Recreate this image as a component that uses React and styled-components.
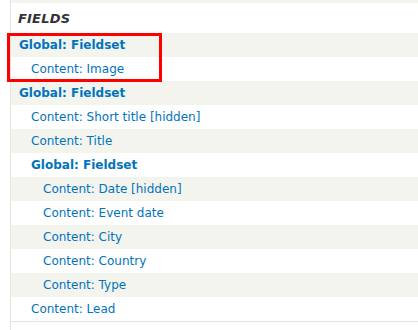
import React from "react";
import styled, { createGlobalStyle } from "styled-components";

const Global = createGlobalStyle`
  html, body { margin: 0; padding: 0; background: #fff; }
  body { font-family: "DejaVu Sans", "Liberation Sans", sans-serif; }
`;

const Page = styled.div`
  position: relative;
  width: 418px;
  height: 330px;
  overflow: hidden;
  background: #fff;
`;

const Panel = styled.div`
  margin-left: 10px;
  border-left: 1px solid #e6e4df;
  height: 330px;
`;

const TopBand = styled.div`
  height: 3px;
  background: #f3f4ee;
`;

const Header = styled.div`
  height: 30px;
  display: flex;
  align-items: center;
  padding-left: 7px;
  font-weight: bold;
  font-style: italic;
  font-size: 13px;
  color: #333;
  letter-spacing: 0.2px;
`;

const List = styled.div`
  border-bottom: 1px solid #e6e4df;
`;

const Row = styled.div`
  height: 24px;
  display: flex;
  align-items: center;
  padding-left: ${(p) => 8 + p.$level * 12}px;
  background: ${(p) => (p.$odd ? "#f3f4ee" : "#fff")};
  font-size: 12px;
  font-weight: ${(p) => (p.$bold ? "bold" : "normal")};
  color: #0074bd;
`;

const Highlight = styled.div`
  position: absolute;
  left: 7px;
  top: 33px;
  width: 149px;
  height: 43px;
  border: 3px solid #f00;
`;

const rows = [
  { t: "Global: Fieldset", l: 0, b: true },
  { t: "Content: Image", l: 1 },
  { t: "Global: Fieldset", l: 0, b: true },
  { t: "Content: Short title [hidden]", l: 1 },
  { t: "Content: Title", l: 1 },
  { t: "Global: Fieldset", l: 1, b: true },
  { t: "Content: Date [hidden]", l: 2 },
  { t: "Content: Event date", l: 2 },
  { t: "Content: City", l: 2 },
  { t: "Content: Country", l: 2 },
  { t: "Content: Type", l: 2 },
  { t: "Content: Lead", l: 1 },
];

export default function App() {
  return (
    <Page>
      <Global />
      <Panel>
        <TopBand />
        <Header>FIELDS</Header>
        <List>
          {rows.map((r, i) => (
            <Row key={i} $level={r.l} $bold={r.b} $odd={i % 2 === 0}>
              {r.t}
            </Row>
          ))}
        </List>
      </Panel>
      <Highlight />
    </Page>
  );
}
